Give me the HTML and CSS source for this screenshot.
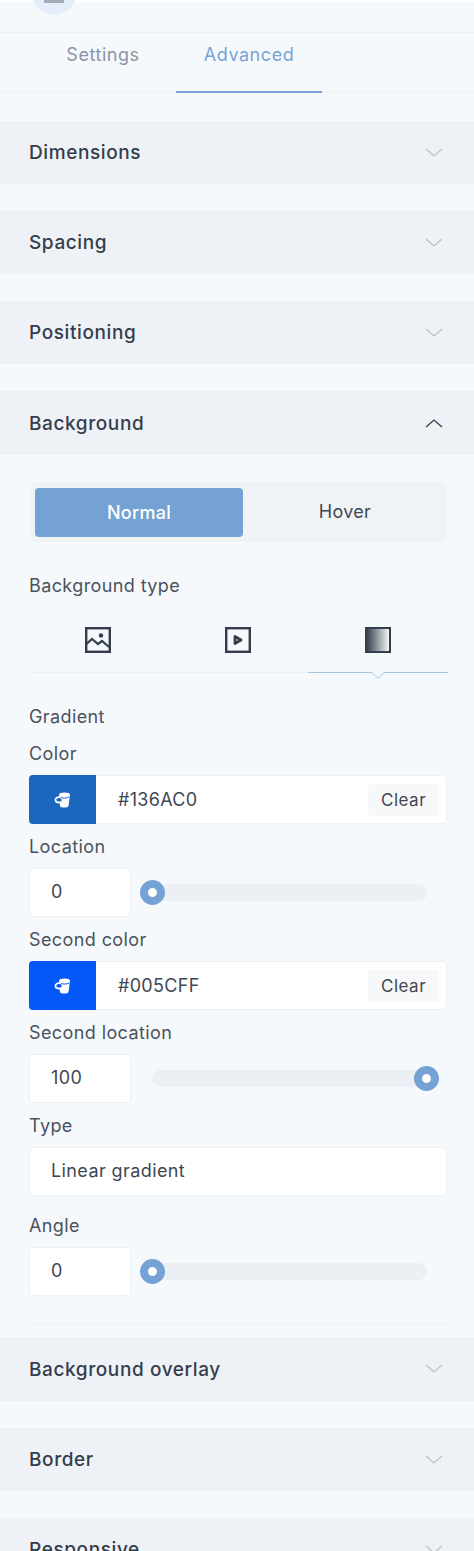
FILE: index.html
```html
<!DOCTYPE html>
<html lang="en">
<head>
    <meta charset="UTF-8">
    <title>Advanced settings</title>
    <link rel="stylesheet" href="styles.css">
</head>
<body>
    <svg width="0" height="0" class="defs">
        <defs>
            <symbol id="bucket" viewBox="0 0 18 18">
                <path d="M5 4l1 11c.3 2 8 2 8.500 0L16 4z" fill="#fff"/>
                <ellipse cx="10.500" cy="3.500" rx="5.500" ry="2" fill="#fff"/>
                <path d="M5.500 5.800C8 7.500 13 7.500 15.500 5.800" stroke="currentColor" stroke-width="1" fill="none"/>
                <circle cx="5.500" cy="9" r="2.200" fill="currentColor"/>
                <path d="M7 6.500C3 5.500 1 7.500 1.500 9.500 2 11.500 5 12 7.500 11" stroke="#fff" stroke-width="1.800" fill="none"/>
            </symbol>
        </defs>
    </svg>

    <div class="top">
        <div class="avatar"><span class="avatar-mark"></span></div>
    </div>

    <div class="tabs">
        <div class="tab">Settings</div>
        <div class="tab active">Advanced</div>
    </div>

    <div class="section-head first">
        <span>Dimensions</span>
        <svg class="chevron" viewBox="0 0 18 10"><path d="M1 1l8 7 8-7"/></svg>
    </div>
    <div class="section-head">
        <span>Spacing</span>
        <svg class="chevron" viewBox="0 0 18 10"><path d="M1 1l8 7 8-7"/></svg>
    </div>
    <div class="section-head">
        <span>Positioning</span>
        <svg class="chevron" viewBox="0 0 18 10"><path d="M1 1l8 7 8-7"/></svg>
    </div>
    <div class="section-head open">
        <span>Background</span>
        <svg class="chevron" viewBox="0 0 18 10"><path d="M1 9l8-7 8 7"/></svg>
    </div>

    <div class="section-body">
        <div class="toggle">
            <div class="toggle-btn selected">Normal</div>
            <div class="toggle-btn other">Hover</div>
        </div>

        <div class="label type-label">Background type</div>
        <div class="type-tabs">
            <div class="type-tab">
                <svg class="type-icon" viewBox="0 0 26 26">
                    <rect x="1.200" y="1.200" width="23.600" height="23.600" fill="none" stroke="#343d4c" stroke-width="2.400"/>
                    <path d="M1.500 17l5.500-5 6 5 4-3 7 6" fill="none" stroke="#343d4c" stroke-width="2.200"/>
                    <circle cx="16" cy="8.500" r="2.200" fill="#343d4c"/>
                </svg>
            </div>
            <div class="type-tab">
                <svg class="type-icon" viewBox="0 0 26 26">
                    <rect x="1.200" y="1.200" width="23.600" height="23.600" fill="none" stroke="#343d4c" stroke-width="2.400"/>
                    <path d="M10 9.500v7l6-3.500z" fill="none" stroke="#343d4c" stroke-width="2.800" stroke-linejoin="round"/>
                </svg>
            </div>
            <div class="type-tab current">
                <div class="gradient-icon"></div>
                <svg class="notch" viewBox="0 0 16 8"><path d="M0 .5h2l6 6 6-6h2"/></svg>
            </div>
        </div>

        <div class="label gradient-label">Gradient</div>

        <div class="label">Color</div>
        <div class="color-row">
            <div class="swatch swatch-one"><svg class="bucket"><use href="#bucket"/></svg></div>
            <div class="color-value">#136AC0</div>
            <div class="clear">Clear</div>
        </div>

        <div class="label">Location</div>
        <div class="number-row">
            <div class="field number">0</div>
            <div class="slider"><span class="thumb"></span></div>
        </div>

        <div class="label">Second color</div>
        <div class="color-row">
            <div class="swatch swatch-two"><svg class="bucket"><use href="#bucket"/></svg></div>
            <div class="color-value">#005CFF</div>
            <div class="clear">Clear</div>
        </div>

        <div class="label">Second location</div>
        <div class="number-row">
            <div class="field number">100</div>
            <div class="slider at-end"><span class="thumb"></span></div>
        </div>

        <div class="label">Type</div>
        <div class="field select">Linear gradient</div>

        <div class="label angle-label">Angle</div>
        <div class="number-row">
            <div class="field number">0</div>
            <div class="slider"><span class="thumb"></span></div>
        </div>

        <div class="dotted"></div>
    </div>

    <div class="section-head after-body">
        <span>Background overlay</span>
        <svg class="chevron" viewBox="0 0 18 10"><path d="M1 1l8 7 8-7"/></svg>
    </div>
    <div class="section-head">
        <span>Border</span>
        <svg class="chevron" viewBox="0 0 18 10"><path d="M1 1l8 7 8-7"/></svg>
    </div>
    <div class="section-head">
        <span>Responsive</span>
        <svg class="chevron" viewBox="0 0 18 10"><path d="M1 1l8 7 8-7"/></svg>
    </div>
</body>
</html>
```

FILE: styles.css
```css
html, body {
    height: 1551px;
    overflow: hidden;
}
body {
    margin: 0;
    background: #f6f9fb;
    font-family: "Inter", "Open Sans", sans-serif;
    color: #3f4754;
}
.defs {
    display: block;
    height: 0;
}
.top {
    height: 32px;
    border-bottom: 1px solid #edf1f4;
    background: linear-gradient(#fff 2px, #f6f9fb 2px);
    overflow: hidden;
}
.avatar {
    width: 44px;
    height: 44px;
    margin: -29px 0 0 32px;
    border-radius: 50%;
    background: #e3eefa;
    display: flex;
    justify-content: center;
}
.avatar-mark {
    width: 20px;
    height: 3px;
    margin-top: 29px;
    background: #a3abb6;
}
.tabs {
    display: flex;
    height: 59px;
    padding-left: 30px;
    border-bottom: 1px solid #edf1f4;
}
.tab {
    width: 146px;
    box-sizing: border-box;
    height: 60px;
    padding-top: 10px;
    line-height: 24px;
    font-size: 18px;
    letter-spacing: .55px;
    text-align: center;
    color: #8a93a6;
}
.tab.active {
    color: #77a3d6;
    border-bottom: 2px solid #74a2d4;
}
.section-head {
    display: flex;
    align-items: center;
    justify-content: space-between;
    height: 63px;
    margin-top: 27px;
    padding: 0 31px 0 29px;
    background: #eef2f6;
    font-size: 19px;
    font-weight: 500;
    letter-spacing: .6px;
    color: #343d4c;
}
.section-head.first {
    margin-top: 28px;
}
.section-head.open {
    height: 64px;
}
.section-head.after-body {
    height: 64px;
    margin-top: 12px;
}
.chevron {
    width: 18px;
    height: 10px;
    fill: none;
    stroke: #b9c0c8;
    stroke-width: 1.300;
}
.open .chevron {
    stroke: #343d4c;
}
.section-body {
    padding: 27px 27px 0 29px;
}
.toggle {
    display: flex;
    box-sizing: border-box;
    height: 60px;
    margin-left: 1px;
    padding: 6px 5px 5px;
    border-radius: 6px;
    background: #eff3f6;
}
.toggle-btn {
    flex: 1;
    display: flex;
    align-items: center;
    justify-content: center;
    border-radius: 4px;
    font-size: 18px;
    letter-spacing: .3px;
    line-height: 20px;
}
.toggle-btn.selected {
    flex: none;
    width: 208px;
    background: #74a2d4;
    color: #fff;
    font-weight: 500;
}
.toggle-btn.other {
    padding: 0 0 2px 5px;
}
.label {
    height: 24px;
    line-height: 26px;
    font-size: 18px;
    letter-spacing: .4px;
    color: #4a5260;
}
.type-label {
    margin-top: 31px;
}
.type-tabs {
    display: flex;
    height: 69px;
    margin: 6px -1px 0 -1px;
    border-bottom: 1px solid #edf1f4;
}
.type-tab {
    position: relative;
    flex: 1;
    box-sizing: border-box;
    display: flex;
    justify-content: center;
    padding-top: 24px;
}
.type-tab.current {
    height: 70px;
    border-bottom: 1px solid #a9c6df;
}
.type-icon, .gradient-icon {
    width: 26px;
    height: 26px;
}
.gradient-icon {
    box-sizing: border-box;
    border: 2px solid #343d4c;
    background: linear-gradient(90deg, #39424f, #f4f6f8);
}
.notch {
    position: absolute;
    left: 62px;
    bottom: -8px;
    width: 16px;
    height: 8px;
    background: #f6f9fb;
    fill: none;
    stroke: #a9c6df;
}
.gradient-label {
    margin-top: 31px;
}
.gradient-label + .label {
    margin-top: 13px;
}
.color-row {
    display: flex;
    align-items: center;
    box-sizing: border-box;
    height: 49px;
    margin: 10px 0;
    border: 1px solid #edf1f4;
    border-radius: 4px;
    background: #fff;
}
.swatch {
    display: flex;
    align-items: center;
    justify-content: center;
    width: 67px;
    height: 49px;
    margin-left: -1px;
    border-radius: 4px 0 0 4px;
}
.swatch-one {
    background: #1a67bd;
    color: #1a67bd;
}
.swatch-two {
    background: #0558f8;
    color: #0558f8;
}
.bucket {
    width: 18px;
    height: 18px;
}
.color-value {
    flex: 1;
    padding-left: 22px;
    font-size: 18px;
    letter-spacing: .3px;
}
.clear {
    display: flex;
    align-items: center;
    justify-content: center;
    width: 71px;
    height: 32px;
    margin-right: 7px;
    border-radius: 4px;
    background: #f7f8f9;
    font-size: 17px;
    letter-spacing: .5px;
}
.number-row {
    display: flex;
    align-items: center;
    margin: 10px 0;
}
.field {
    box-sizing: border-box;
    height: 49px;
    padding-left: 21px;
    line-height: 46px;
    border: 1px solid #edf1f4;
    border-radius: 4px;
    background: #fff;
    font-size: 18px;
    letter-spacing: .4px;
}
.number {
    width: 102px;
}
.select {
    margin: 10px 0 0;
}
.slider {
    position: relative;
    width: 275px;
    height: 17px;
    margin-left: 21px;
    border-radius: 9px;
    background: #ecf0f4;
}
.thumb {
    position: absolute;
    left: -12px;
    top: -4px;
    box-sizing: border-box;
    width: 25px;
    height: 25px;
    border: 8px solid #74a2d4;
    border-radius: 50%;
    background: #fff;
}
.at-end .thumb {
    left: auto;
    right: -12px;
}
.angle-label {
    margin-top: 17px;
}
.dotted {
    margin: 28px -1px 0 -1px;
    border-top: 1px dotted #e6ebef;
}
```
